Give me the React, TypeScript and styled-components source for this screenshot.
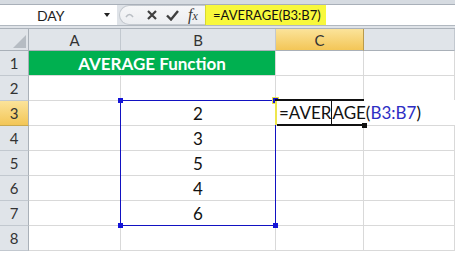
import React from 'react';
import styled, {createGlobalStyle, css} from 'styled-components';

const GlobalStyle = createGlobalStyle`
  html, body {
    margin: 0;
    padding: 0;
  }
  body {
    width: 455px;
    height: 253px;
    overflow: hidden;
    background: #fff;
    font-family: Lato, "Liberation Sans", sans-serif;
  }
`;

const Window = styled.div`
  width: 455px;
  height: 253px;
  overflow: hidden;
  display: flex;
  flex-direction: column;
  background: #dfe3e8;
`;

const TopStrip = styled.div`
  height: 4px;
  flex: none;
  background: #d6dbe1;
  border-bottom: 1px solid #a9b0b9;
`;

const FormulaBar = styled.div`
  height: 20px;
  flex: none;
  display: flex;
  background: #dfe3e8;
  border-bottom: 1px solid #b1b8c0;
`;

const NameBox = styled.div`
  width: 117px;
  flex: none;
  display: flex;
  align-items: center;
  background: #fff;
  font-size: 14px;
  color: #1f1f1f;
  padding-left: 37px;
  box-sizing: border-box;
  position: relative;
`;

const DropArrow = styled.span`
  position: absolute;
  left: 104px;
  top: 8px;
  width: 0;
  height: 0;
  border-left: 3.5px solid transparent;
  border-right: 3.5px solid transparent;
  border-top: 4px solid #222;
`;

const IconArea = styled.div`
  width: 86px;
  flex: none;
  display: flex;
  align-items: center;
  margin-left: 2px;
  background: linear-gradient(#f6f7f8, #eceef1);
  border: 1px solid #c4c9cf;
  border-right: none;
  border-radius: 11px 0 0 11px;
  box-sizing: border-box;
`;

const Grip = styled.svg`
  margin-left: 5px;
  flex: none;
`;

const IconButton = styled.span<{ $gap: number }>`
  display: flex;
  align-items: center;
  margin-left: ${p => p.$gap}px;
`;

const Fx = styled.span`
  font-family: "Liberation Serif", serif;
  font-style: italic;
  font-size: 16px;
  color: #3a3a3a;
  line-height: 1;
  & small {
    font-size: 12px;
  }
`;

const FormulaInput = styled.div`
  flex: 1;
  display: flex;
  background: #fff;
`;

const Highlight = styled.div`
  background: #f8f83c;
  border-left: 1px solid #d8d830;
  padding: 0 5px 0 7px;
  display: flex;
  align-items: center;
  font-size: 13px;
  color: #111;
`;

const Spacer = styled.div`
  height: 2px;
  flex: none;
`;

const Sheet = styled.div`
  display: grid;
  grid-template-columns: 29px 92px 155px 88px 1fr;
  grid-template-rows: 22px repeat(8, 25px) 1fr;
  flex: 1;
  background: #fff;
  border-top: 1px solid #abb2ba;
`;

interface IPos {
  $row: number;
  $col: number;
  $span?: number;
}

// every grid piece is placed by row/col so the overlays don't push cells around
const placed = css<IPos>`
  grid-row: ${p => p.$row};
  grid-column: ${p => p.$col} / span ${p => p.$span || 1};
`;

const headerSelected = css`
  background: linear-gradient(#fbe39a, #f3c657);
  color: #333;
`;

const ColHeader = styled.div<IPos & { $selected?: boolean }>`
  ${placed};
  background: #e0e4e9;
  border-right: 1px solid #c2c8cf;
  border-bottom: 1px solid #a9b0b8;
  display: flex;
  align-items: center;
  justify-content: center;
  font-size: 15px;
  color: #333;
  ${p => p.$selected && headerSelected};
  ${p => p.$selected && 'border-right-color: #b99a4c;'}
`;

const Corner = styled(ColHeader)`
  position: relative;
  border-right-color: #a9b0b8;
  &::after {
    content: '';
    position: absolute;
    right: 2px;
    bottom: 2px;
    width: 0;
    height: 0;
    border-left: 13px solid transparent;
    border-bottom: 13px solid #b6bcc3;
  }
`;

const RowHeader = styled.div<IPos & { $selected?: boolean }>`
  ${placed};
  background: #e0e4e9;
  border-right: 1px solid #a9b0b8;
  border-bottom: 1px solid #c2c8cf;
  display: flex;
  align-items: center;
  justify-content: center;
  font-size: 15px;
  color: #333;
  ${p => p.$selected && headerSelected};
  ${p => p.$selected && 'border-bottom-color: #c9a94f;'}
`;

const Cell = styled.div<IPos>`
  ${placed};
  border-right: 1px solid #d9d9d9;
  border-bottom: 1px solid #d9d9d9;
  display: flex;
  align-items: center;
  justify-content: center;
  font-size: 17px;
  color: #111;
`;

const Title = styled(Cell)`
  background: #00b050;
  font-weight: 700;
  color: #fff;
`;

const Selection = styled.div`
  grid-column: 3;
  grid-row: 4 / 9;
  margin: -1px 0 0 -1px;
  border: 1px solid #1212c2;
  position: relative;
  z-index: 2;
  pointer-events: none;
`;

const Handle = styled.span<{ $x: 'l' | 'r'; $y: 't' | 'b'; $tint?: boolean }>`
  position: absolute;
  width: 5px;
  height: 5px;
  background: #1414d8;
  ${p => (p.$x === 'l' ? 'left: -3px;' : 'right: -3px;')}
  ${p => (p.$y === 't' ? 'top: -3px;' : 'bottom: -3px;')}
  ${p => p.$tint && 'box-shadow: 0 0 0 1px #e8e04a;'}
`;

const Editor = styled.div`
  grid-column: 4 / 6;
  grid-row: 4;
  margin: -1px 0 1px -1px;
  position: relative;
  z-index: 3;
  background: #fff;
  border-left: 2px solid #eee64c;
  display: flex;
  align-items: center;
  padding-left: 2px;
  font-size: 17px;
  color: #111;
  white-space: nowrap;
  &::before {
    content: '';
    position: absolute;
    left: -2px;
    top: -1px;
    width: 89px;
    height: 2px;
    background: #111;
  }
  &::after {
    content: '';
    position: absolute;
    left: 0;
    bottom: -1px;
    width: 86px;
    height: 2px;
    background: #111;
  }
`;

const FillHandle = styled.span`
  position: absolute;
  left: 85px;
  bottom: -3px;
  width: 5px;
  height: 5px;
  background: #111;
`;

const Ref = styled.span`
  color: #2e2ec4;
`;

const Caret = styled.span`
  display: inline-block;
  width: 1px;
  height: 25px;
  background: #111;
  vertical-align: middle;
  margin: -4px 0;
`;

const cols = ['A', 'B', 'C', ''];
const values: Record<number, string> = {3: '2', 4: '3', 5: '5', 6: '4', 7: '6'};

const App = () => {
  const rows = [1, 2, 3, 4, 5, 6, 7, 8];

  return (
    <>
      <GlobalStyle/>
      <Window>
        <TopStrip/>
        <FormulaBar>
          <NameBox>
            DAY
            <DropArrow/>
          </NameBox>
          <IconArea>
            <Grip width="9" height="6" viewBox="0 0 9 6">
              <path d="M1 5 Q4.5 0 8 5" fill="none" stroke="#b9bec4" strokeWidth="1.6"/>
            </Grip>
            <IconButton $gap={13}>
              <svg width="10" height="10" viewBox="0 0 10 10">
                <path d="M1 1 L9 9 M9 1 L1 9" stroke="#3f3f3f" strokeWidth="2.2"/>
              </svg>
            </IconButton>
            <IconButton $gap={9}>
              <svg width="13" height="11" viewBox="0 0 13 11">
                <path d="M1 5.5 L5 9.5 L12 1" fill="none" stroke="#3f3f3f" strokeWidth="2.4"/>
              </svg>
            </IconButton>
            <IconButton $gap={9}>
              <Fx>f<small>x</small></Fx>
            </IconButton>
          </IconArea>
          <FormulaInput>
            <Highlight>=AVERAGE(B3:B7)</Highlight>
          </FormulaInput>
        </FormulaBar>
        <Spacer/>
        <Sheet>
          <Corner $row={1} $col={1}/>
          {cols.map((c, i) => (
            <ColHeader key={i} $row={1} $col={i + 2} $selected={c === 'C'}>{c}</ColHeader>
          ))}
          {rows.map(r => (
            <React.Fragment key={r}>
              <RowHeader $row={r + 1} $col={1} $selected={r === 3}>{r}</RowHeader>
              {r === 1 ? (
                <Title $row={2} $col={2} $span={2}>AVERAGE Function</Title>
              ) : (
                <>
                  <Cell $row={r + 1} $col={2}/>
                  <Cell $row={r + 1} $col={3}>{values[r]}</Cell>
                </>
              )}
              <Cell $row={r + 1} $col={4}/>
              <Cell $row={r + 1} $col={5}/>
            </React.Fragment>
          ))}
          <Selection>
            <Handle $x="l" $y="t"/>
            <Handle $x="r" $y="t" $tint/>
            <Handle $x="l" $y="b"/>
            <Handle $x="r" $y="b"/>
          </Selection>
          <Editor>
            =AVER<Caret/>AGE(<Ref>B3:B7</Ref>)
            <FillHandle/>
          </Editor>
        </Sheet>
      </Window>
    </>
  );
};

export default App;
